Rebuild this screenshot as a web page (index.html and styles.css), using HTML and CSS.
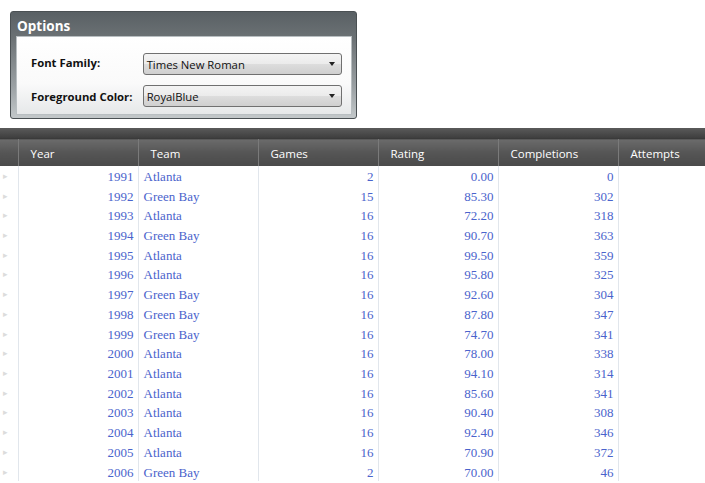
FILE: index.html
```html
<!DOCTYPE html>
<html lang="en">
<head>
    <meta charset="UTF-8">
    <title>Options Grid</title>
    <link rel="stylesheet" href="styles.css">
</head>
<body>
    <!-- Options panel -->
    <div class="options">
        <div class="options-title">Options</div>
        <div class="options-body">
            <div class="option-row">
                <label class="first">Font Family:</label>
                <div class="combo">Times New Roman<span class="arrow"></span></div>
            </div>
            <div class="option-row">
                <label>Foreground Color:</label>
                <div class="combo">RoyalBlue<span class="arrow"></span></div>
            </div>
        </div>
    </div>

    <!-- Data grid -->
    <div class="grid">
        <div class="grid-top"></div>
        <table>
            <colgroup>
                <col class="c-head">
                <col class="c-col"><col class="c-col"><col class="c-col">
                <col class="c-col"><col class="c-col"><col>
            </colgroup>
            <thead>
                <tr>
                    <th></th>
                    <th>Year</th>
                    <th>Team</th>
                    <th>Games</th>
                    <th>Rating</th>
                    <th>Completions</th>
                    <th>Attempts</th>
                </tr>
            </thead>
            <tbody id="rows"></tbody>
        </table>
    </div>

    <script>
        const data = [
            [1991, 'Atlanta', 2, '0.00', 0],
            [1992, 'Green Bay', 15, '85.30', 302],
            [1993, 'Atlanta', 16, '72.20', 318],
            [1994, 'Green Bay', 16, '90.70', 363],
            [1995, 'Atlanta', 16, '99.50', 359],
            [1996, 'Atlanta', 16, '95.80', 325],
            [1997, 'Green Bay', 16, '92.60', 304],
            [1998, 'Green Bay', 16, '87.80', 347],
            [1999, 'Green Bay', 16, '74.70', 341],
            [2000, 'Atlanta', 16, '78.00', 338],
            [2001, 'Atlanta', 16, '94.10', 314],
            [2002, 'Atlanta', 16, '85.60', 341],
            [2003, 'Atlanta', 16, '90.40', 308],
            [2004, 'Atlanta', 16, '92.40', 346],
            [2005, 'Atlanta', 16, '70.90', 372],
            [2006, 'Green Bay', 2, '70.00', 46]
        ];
        const rows = document.getElementById('rows');
        data.forEach(d => {
            const tr = document.createElement('tr');
            tr.innerHTML = `<td class="row-head">&#9656;</td>
                <td class="num">${d[0]}</td>
                <td>${d[1]}</td>
                <td class="num">${d[2]}</td>
                <td class="num">${d[3]}</td>
                <td class="num">${d[4]}</td>
                <td></td>`;
            rows.appendChild(tr);
        });
    </script>
</body>
</html>
```

FILE: styles.css
```css
body {
    margin: 0;
    background: #fff;
    font-family: "Open Sans", "Noto Sans", sans-serif;
    overflow: hidden;
}
.options {
    margin: 11px 0 0 10px;
    width: 347px;
    height: 108px;
    box-sizing: border-box;
    border: 1px solid #4a5053;
    border-radius: 3px;
    background: linear-gradient(#596064, #6c7275 25%, #9aa0a3 70%, #c3c8ca);
    padding: 0 4px 4px 5px;
}
.options-title {
    height: 24px;
    line-height: 28px;
    color: #fff;
    font-weight: bold;
    font-size: 13.5px;
    padding-left: 1px;
}
.options-body {
    height: 79px;
    box-sizing: border-box;
    border: 1px solid #b8bec1;
    background: linear-gradient(#fff, #fafafa 60%, #e6e8e9);
    padding: 16px 9px 0 14px;
}
.option-row {
    display: flex;
    align-items: center;
    height: 22px;
    margin-bottom: 10px;
}
.option-row label {
    width: 112px;
    font-size: 11.3px;
    font-weight: bold;
    color: #111;
}
.option-row label.first {
    margin-top: -4px;
}
.combo {
    position: relative;
    width: 200px;
    height: 22px;
    box-sizing: border-box;
    border: 1px solid #707070;
    border-radius: 3px;
    background: linear-gradient(#f4f4f4, #ebebeb 50%, #dddddd 51%, #cfcfcf);
    font-size: 11.3px;
    line-height: 21px;
    padding-left: 3px;
    color: #111;
}
.arrow {
    position: absolute;
    right: 6px;
    top: 8px;
    border-left: 3.5px solid transparent;
    border-right: 3.5px solid transparent;
    border-top: 4px solid #222;
}
.grid {
    margin-top: 9px;
}
.grid-top {
    height: 10px;
    background: linear-gradient(#5a5a5a, #3e3e3e);
}
table {
    border-collapse: collapse;
    table-layout: fixed;
    width: 720px;
}
.c-head { width: 18px; }
.c-col { width: 120px; }
th {
    box-sizing: border-box;
    height: 27px;
    padding: 2px 0 0 12px;
    text-align: left;
    font-weight: normal;
    font-size: 11.5px;
    color: #fff;
    background: linear-gradient(#6b6b6b, #555 50%, #4a4a4a);
    border-left: 1px solid #7a7a7a;
    border-top: 1px solid #3a3a3a;
}
th:first-child {
    border-left: none;
}
td {
    box-sizing: border-box;
    height: 19.73px;
    padding: 2px 5px 0;
    font-family: "Liberation Serif", "Times New Roman", serif;
    font-size: 13px;
    color: #4a63cc;
    border-left: 1px solid #e1e6ec;
    white-space: nowrap;
    line-height: 1;
}
td.num {
    text-align: right;
    padding-right: 4px;
}
td.row-head {
    border-left: none;
    color: #dcdcdc;
    font-family: "DejaVu Sans", sans-serif;
    font-size: 9px;
    padding-left: 3px;
}
```
